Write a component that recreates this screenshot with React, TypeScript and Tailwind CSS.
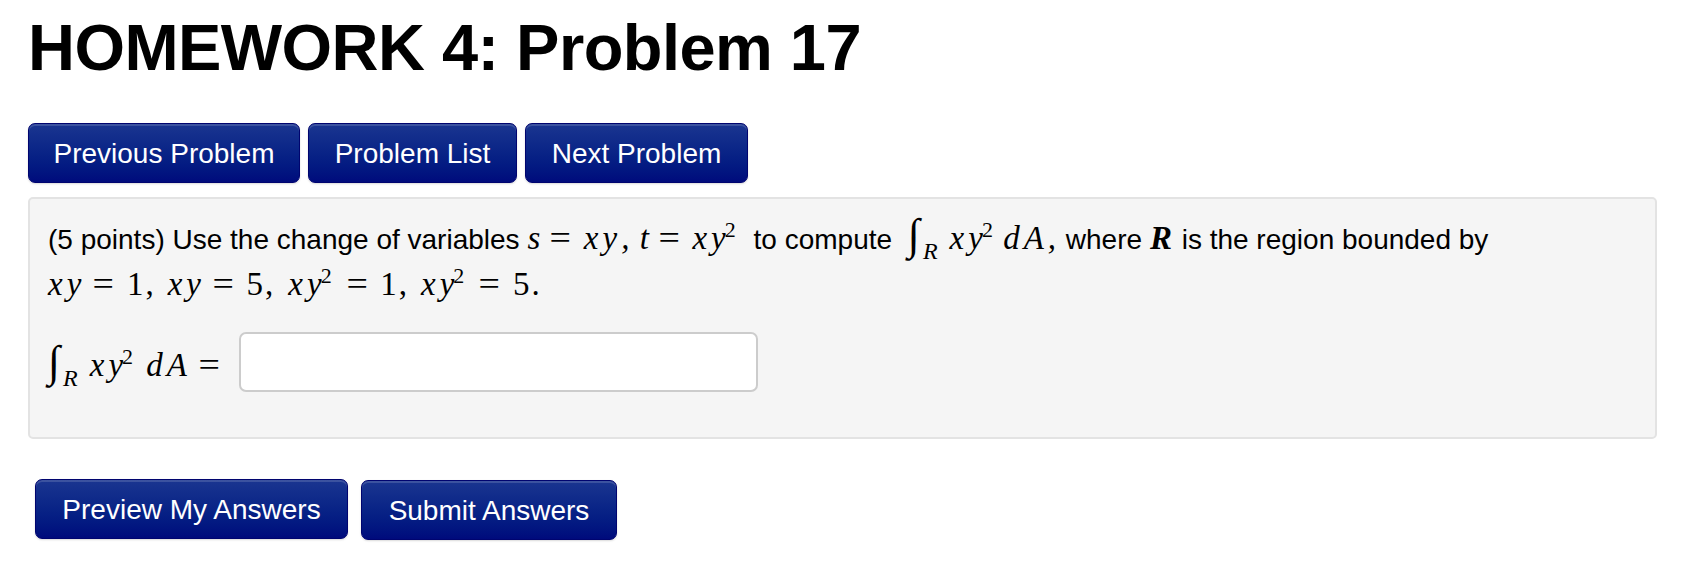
const btn =
  "h-[60px] rounded-[7px] border border-[#00046f] pt-[1px] text-white text-[28px] [font-family:'Liberation_Sans',Arial,sans-serif] bg-gradient-to-b from-[#1a3590] to-[#000a7c] shadow-[inset_0_2px_0_rgba(255,255,255,0.15),0_1px_2px_rgba(0,0,0,0.15)]";

function M({ children, className = "" }: { children: React.ReactNode; className?: string }) {
  return (
    <span className={`[font-family:'Liberation_Serif',serif] text-[33px] leading-none italic tracking-[2px] ${className}`}>
      {children}
    </span>
  );
}

function Eq() {
  return <span className="ml-[9px] mr-[14px] inline-block scale-x-[1.15] not-italic tracking-normal">=</span>;
}

function Xy() {
  return <span className="tracking-[4px]">xy</span>;
}

function Sq() {
  return <span className="relative top-[-12px] ml-[-5px] mr-[7px] text-[22px] not-italic tracking-normal leading-none">2</span>;
}

function Integral() {
  return (
    <span className="whitespace-nowrap">
      <span className="text-[44px] tracking-normal leading-none">∫</span>
      <span className="relative top-[10px] ml-[3px] mr-[12px] text-[24px] tracking-normal leading-none">R</span>
      <Xy />
      <Sq />
    </span>
  );
}

function Num({ children, className = "" }: { children: React.ReactNode; className?: string }) {
  return <span className={`not-italic ${className}`}>{children}</span>;
}

export default function App() {
  return (
    <div className="w-[1681px] h-[565px] overflow-hidden bg-white px-[28px] text-black [font-family:'Liberation_Sans',Arial,sans-serif]">
      <h1 className="pt-[12px] text-[65px] leading-[72px] font-bold tracking-[-0.55px]">HOMEWORK 4: Problem 17</h1>

      <div className="mt-[39px] flex gap-[8px]">
        <button className={`${btn} w-[272px]`}>Previous Problem</button>
        <button className={`${btn} w-[209px]`}>Problem List</button>
        <button className={`${btn} w-[223px]`}>Next Problem</button>
      </div>

      <div className="mt-[14px] h-[242px] w-[1629px] rounded-[5px] border-2 border-[#e3e3e3] bg-[#f5f5f5] px-[18px] pt-[14px]">
        <p className="text-[28px] leading-[46px]">
          (5 points) Use the change of variables{" "}
          <M>
            s<Eq />
            <Xy />, <span className="ml-[-2px]">t</span>
            <Eq />
            <Xy />
            <Sq />
          </M>{" "}
          <span className="ml-[3px]">to compute</span>{" "}
          <M className="ml-[8px]">
            <Integral /> <span className="ml-[-7px] tracking-[4px]">dA</span>,
          </M>{" "}
          where <M className="font-bold">R</M> is the region bounded by
          <br />
          <M>
            <Xy />
            <Eq />
            <Num className="mr-[12px]">1,</Num>
            <Xy />
            <Eq />
            <Num className="mr-[13px]">5,</Num>
            <Xy />
            <Sq />
            <Eq />
            <Num className="mr-[12px]">1,</Num>
            <Xy />
            <Sq />
            <Eq />
            <Num>5.</Num>
          </M>
        </p>
        <div className="mt-[23px] flex items-center gap-[6px]">
          <M>
            <Integral /> <span className="ml-[-4px] tracking-[4px]">dA</span>
            <Eq />
          </M>
          <input className="h-[60px] w-[519px] rounded-[7px] border-2 border-[#cccccc] bg-white" />
        </div>
      </div>

      <div className="mt-[40px] ml-[7px] flex items-start gap-[13px]">
        <button className={`${btn} w-[313px]`}>Preview My Answers</button>
        <button className={`${btn} w-[256px] mt-[1px]`}>Submit Answers</button>
      </div>
    </div>
  );
}
